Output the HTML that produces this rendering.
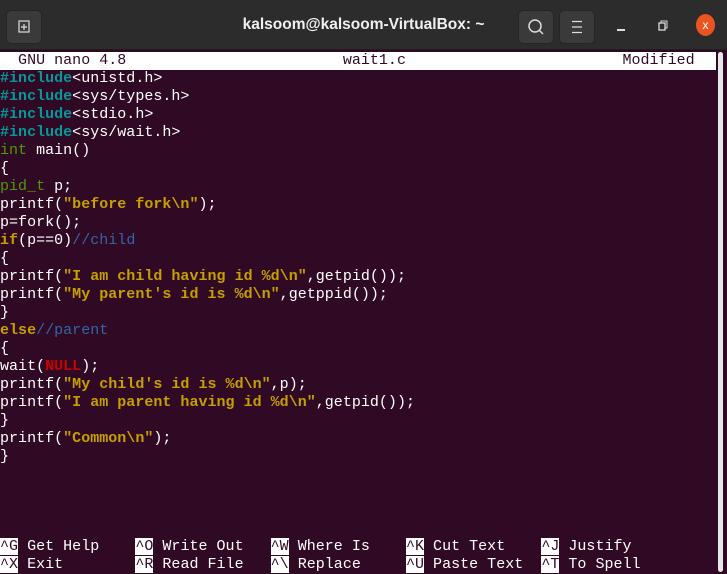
<!DOCTYPE html><html><head><style>
body{margin:0;width:727px;height:574px;background:#300a24;overflow:hidden;position:relative;font-family:"Liberation Sans",sans-serif}
.tb{position:absolute;left:0;top:0;width:727px;height:49px;background:#2c2c2c;border-bottom:1px solid #1e1e1e}
.title{position:absolute;left:0;right:0;top:16px;text-align:center;color:#f0f0f0;font-weight:bold;font-size:15.5px}
.btn{position:absolute;top:10px;width:34px;height:32px;background:#3a3a3a;border-radius:5px;border:1px solid #252525}
.term{position:absolute;left:0;top:52px;width:716px;font-family:"Liberation Mono",monospace;font-size:15px;letter-spacing:0.02px;line-height:18px;color:#fff;white-space:pre}
.hd{background:#fff;color:#300a24;height:18px}
.g{color:#4e9a06}.y{color:#c4a000;font-weight:bold}.b{color:#3465a4}.c{color:#06989a;font-weight:bold}.r{color:#cc0000;font-weight:bold}
.k{background:#fff;color:#300a24}
.sb{position:absolute;left:718px;top:52px;width:5px;height:520px;background:#e8e8e8;border-radius:3px}
</style></head><body>
<div class="tb">
<div class="btn" style="left:6px"><svg width="34" height="32"><rect x="12" y="10" width="10" height="11" fill="none" stroke="#ddd" stroke-width="1.2"/><path d="M17 13v6M14 16h6" stroke="#ddd" stroke-width="1.2"/></svg></div>
<div class="title">kalsoom@kalsoom-VirtualBox: ~</div>
<div class="btn" style="left:518px"><svg width="34" height="32"><circle cx="16" cy="15" r="6" fill="none" stroke="#ddd" stroke-width="1.5"/><path d="M20 19l4 4" stroke="#ddd" stroke-width="1.5"/></svg></div>
<div class="btn" style="left:559px"><svg width="34" height="32"><path d="M12 10.5h10M12 16h10M12 21.5h10" stroke="#ddd" stroke-width="1.3"/></svg></div>
<div style="position:absolute;left:617px;top:29px;width:8px;height:1.5px;background:#ddd"></div>
<svg style="position:absolute;left:657px;top:19px" width="12" height="12"><rect x="2" y="4" width="6" height="7" fill="none" stroke="#ddd" stroke-width="1.3"/><path d="M4 4V2h6v7H8" fill="none" stroke="#ddd" stroke-width="1"/></svg>
<div style="position:absolute;left:696px;top:14px;width:19px;height:22px;border-radius:50%;background:#e95420;color:#fff;font-size:12px;text-align:center;line-height:22px">x</div>
</div>
<div class="sb"></div>
<div class="term"><div class="hd">  GNU nano 4.8                        wait1.c                        Modified</div><span class="c">#include</span>&lt;unistd.h&gt;
<span class="c">#include</span>&lt;sys/types.h&gt;
<span class="c">#include</span>&lt;stdio.h&gt;
<span class="c">#include</span>&lt;sys/wait.h&gt;
<span class="g">int</span> main()
{
<span class="g">pid_t</span> p;
printf(<span class="y">"before fork\n"</span>);
p=fork();
<span class="y">if</span>(p==0)<span class="b">//child</span>
{
printf(<span class="y">"I am child having id %d\n"</span>,getpid());
printf(<span class="y">"My parent's id is %d\n"</span>,getppid());
}
<span class="y">else</span><span class="b">//parent</span>
{
wait(<span class="r">NULL</span>);
printf(<span class="y">"My child's id is %d\n"</span>,p);
printf(<span class="y">"I am parent having id %d\n"</span>,getpid());
}
printf(<span class="y">"Common\n"</span>);
}




<span class="k">^G</span> Get Help    <span class="k">^O</span> Write Out   <span class="k">^W</span> Where Is    <span class="k">^K</span> Cut Text    <span class="k">^J</span> Justify
<span class="k">^X</span> Exit        <span class="k">^R</span> Read File   <span class="k">^\</span> Replace     <span class="k">^U</span> Paste Text  <span class="k">^T</span> To Spell</div>
</body></html>
